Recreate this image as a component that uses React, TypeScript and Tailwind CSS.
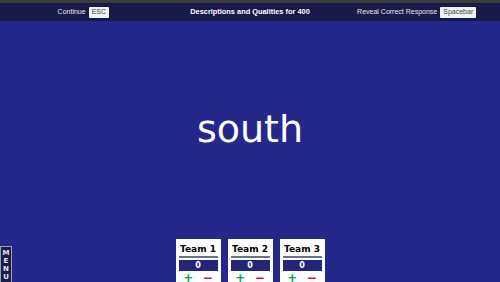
import { Fragment } from 'react';

const teams = [
  { name: 'Team 1', score: 0 },
  { name: 'Team 2', score: 0 },
  { name: 'Team 3', score: 0 },
];

function Key({ label }: { label: string }) {
  return (
    <span className="ml-[3px] flex h-[11px] items-center rounded-[1px] bg-gray-100 px-[3px] text-[7px] text-gray-700">
      {label}
    </span>
  );
}

function TeamCard({ name, score }: { name: string; score: number }) {
  return (
    <div className="flex w-[45px] flex-col items-center bg-white px-[3px] pt-[4px] pb-[6px]">
      <div className="text-[9px] font-bold leading-[12px] text-black">{name}</div>
      <div className="mt-[1px] h-[2px] w-full bg-gray-500" />
      <div className="mt-[2px] flex h-[11px] w-full items-center justify-center bg-[#232676] text-[8px] font-bold text-white">
        {score}
      </div>
      <div className="mt-[1px] flex w-full justify-around text-[12px] font-bold leading-[12px]">
        <span className="text-green-600">+</span>
        <span className="text-red-600">−</span>
      </div>
    </div>
  );
}

export default function App() {
  return (
    <div className="relative flex h-[282px] w-[500px] flex-col overflow-hidden bg-[#25288a] font-['DejaVu_Sans',sans-serif]">
      <div className="h-[3px] bg-[#3b3b3d]" />
      <div className="grid h-[18px] grid-cols-3 items-center bg-[#19194a] font-['Liberation_Sans',Arial,sans-serif] text-[7px] text-gray-200">
        <div className="flex items-center justify-center">
          <span>Continue</span>
          <Key label="ESC" />
        </div>
        <div className="text-center text-[7.4px] font-bold text-white">Descriptions and Qualities for 400</div>
        <div className="flex items-center justify-center">
          <span>Reveal Correct Response</span>
          <Key label="Spacebar" />
        </div>
      </div>

      <div className="flex flex-1 flex-col items-center">
        <div className="mt-[84px] text-[38px] leading-[48px] text-white">south</div>
        <div className="mt-auto flex translate-y-[8px] gap-[7px]">
          {teams.map((t) => (
            <Fragment key={t.name}>
              <TeamCard name={t.name} score={t.score} />
            </Fragment>
          ))}
        </div>
      </div>

      <div className="absolute bottom-0 left-0 flex h-[36px] w-[12px] flex-col items-center border border-b-0 border-gray-400 bg-[#1c1c4e] pt-[2px] text-[7px] font-bold leading-[8px] text-gray-200">
        <span>M</span>
        <span>E</span>
        <span>N</span>
        <span>U</span>
      </div>
    </div>
  );
}
